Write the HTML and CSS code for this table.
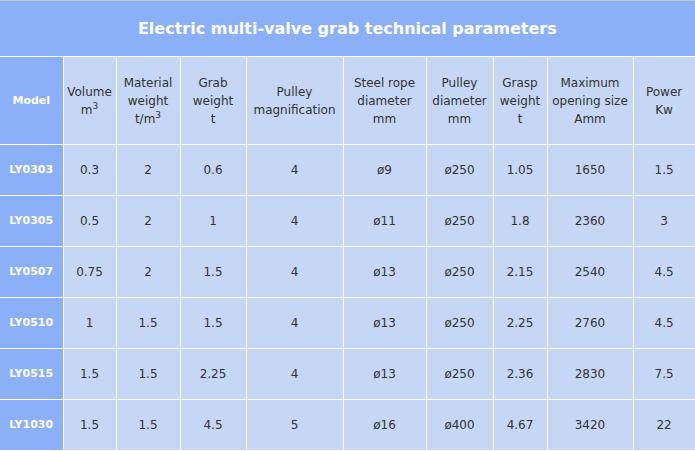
FILE: index.html
```html
<!DOCTYPE html>
<html>
<head>
<meta charset="utf-8">
<link rel="stylesheet" href="styles.css">
</head>
<body>
<table class="spec">
  <colgroup>
    <col class="c1"><col class="c2"><col class="c3"><col class="c4"><col class="c5">
    <col class="c6"><col class="c7"><col class="c8"><col class="c9"><col class="c10">
  </colgroup>
  <tr class="title-row"><th colspan="10" class="title">Electric multi-valve grab technical parameters</th></tr>
  <tr class="head-row">
    <th class="model">Model</th>
    <td>Volume<br>m<sup>3</sup></td>
    <td>Material<br>weight<br>t/m<sup>3</sup></td>
    <td>Grab<br>weight<br>t</td>
    <td>Pulley<br>magnification</td>
    <td>Steel rope<br>diameter<br>mm</td>
    <td>Pulley<br>diameter<br>mm</td>
    <td>Grasp<br>weight<br>t</td>
    <td>Maximum<br>opening size<br>Amm</td>
    <td>Power<br>Kw</td>
  </tr>
  <tr class="data-row"><th class="model">LY0303</th><td>0.3</td><td>2</td><td>0.6</td><td>4</td><td>ø9</td><td>ø250</td><td>1.05</td><td>1650</td><td>1.5</td></tr>
  <tr class="data-row"><th class="model">LY0305</th><td>0.5</td><td>2</td><td>1</td><td>4</td><td>ø11</td><td>ø250</td><td>1.8</td><td>2360</td><td>3</td></tr>
  <tr class="data-row"><th class="model">LY0507</th><td>0.75</td><td>2</td><td>1.5</td><td>4</td><td>ø13</td><td>ø250</td><td>2.15</td><td>2540</td><td>4.5</td></tr>
  <tr class="data-row"><th class="model">LY0510</th><td>1</td><td>1.5</td><td>1.5</td><td>4</td><td>ø13</td><td>ø250</td><td>2.25</td><td>2760</td><td>4.5</td></tr>
  <tr class="data-row"><th class="model">LY0515</th><td>1.5</td><td>1.5</td><td>2.25</td><td>4</td><td>ø13</td><td>ø250</td><td>2.36</td><td>2830</td><td>7.5</td></tr>
  <tr class="data-row"><th class="model">LY1030</th><td>1.5</td><td>1.5</td><td>4.5</td><td>5</td><td>ø16</td><td>ø400</td><td>4.67</td><td>3420</td><td>22</td></tr>
</table>
</body>
</html>
```
FILE: styles.css
```css
html, body {
  margin: 0;
  padding: 0;
  background: #ffffff;
}
.spec {
  width: 695px;
  table-layout: fixed;
  border-collapse: collapse;
  border-top: 1px solid #c3cad6;
  font-family: "DejaVu Sans", Verdana, sans-serif;
  font-size: 12px;
  color: #333333;
}
.c1 { width: 63px; }
.c2 { width: 53px; }
.c3 { width: 64px; }
.c4 { width: 66px; }
.c5 { width: 97px; }
.c6 { width: 83px; }
.c7 { width: 67px; }
.c8 { width: 54px; }
.c9 { width: 86px; }
.c10 { width: 62px; }
.spec td, .spec th {
  border: 1px solid #ffffff;
  padding: 0;
  text-align: center;
  vertical-align: middle;
  line-height: 18px;
  background: #c5d7f4;
}
.spec tr:first-child th { border-top: 0; }
.spec th.title {
  height: 55px;
  background: #8cb0f8;
  color: #ffffff;
  font-weight: bold;
  font-size: 16px;
  border-left: 0;
}
.spec th.model {
  background: #8cb0f8;
  color: #ffffff;
  font-weight: bold;
  font-size: 11px;
  border-left: 0;
}
.head-row td, .head-row th { height: 87px; }
.data-row td, .data-row th { height: 50px; }
.spec sup {
  font-size: 9px;
  line-height: 0;
  vertical-align: 5px;
}
```
